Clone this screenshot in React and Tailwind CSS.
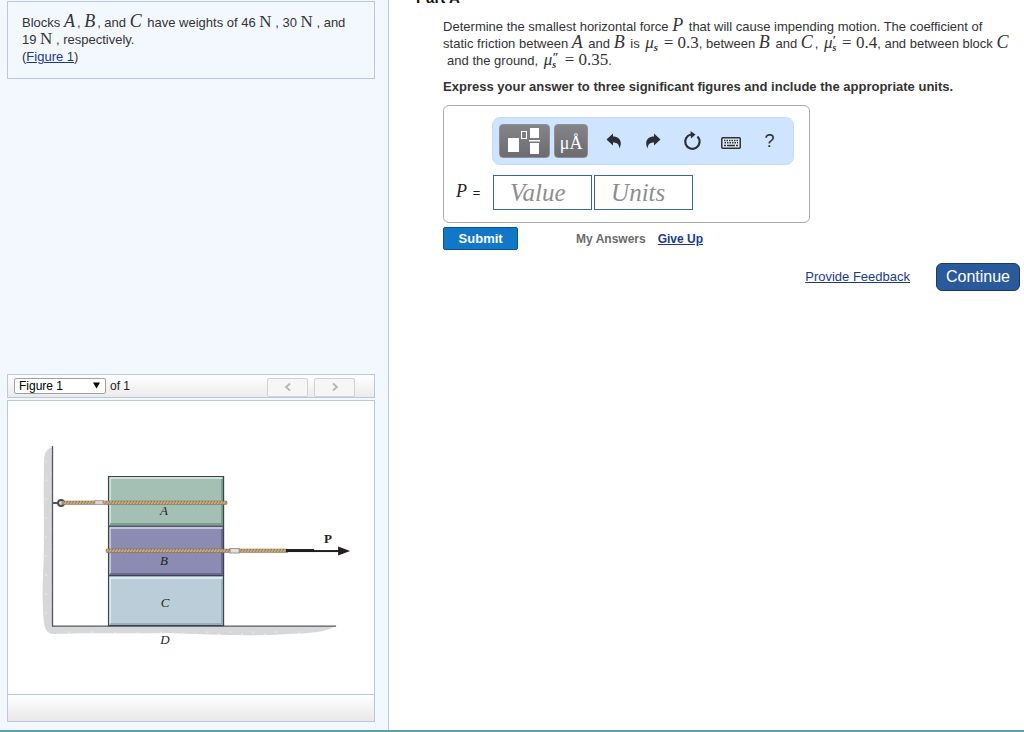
import React, { useState } from "react";

// Italic math variable, e.g. A, B, P
function Var({ children }) {
  return (
    <i className="mr-0.5 font-['Liberation_Serif',serif] text-[18px] leading-[0]">
      {children}
    </i>
  );
}

function Num({ children }) {
  return (
    <span className="font-['Liberation_Serif',serif] text-[17px] leading-[0]">
      {children}
    </span>
  );
}

// Coefficient of friction with subscript s and optional primes
function Mu({ primes }) {
  return (
    <i className="mx-0.5 font-['Liberation_Serif',serif] text-[17px] leading-[0]">
      μ
      {primes ? (
        <span className="inline-flex flex-col align-middle h-4 leading-[8px] font-bold">
          <span className="text-[12px]">{primes}</span>
          <span className="text-[10px]">s</span>
        </span>
      ) : (
        <sub className="text-[11px] font-bold">s</sub>
      )}
    </i>
  );
}

function BlocksFigure() {
  return (
    <svg
      viewBox="0 0 366 293"
      className="block w-full h-auto"
      role="img"
      aria-label="Stacked blocks A, B and C on ground D"
    >
      <defs>
        <pattern id="rope" width="3" height="4" patternUnits="userSpaceOnUse">
          <rect width="3" height="4" fill="#d0b487" />
          <path d="M0 4L3 0" stroke="#7d6548" strokeWidth="0.8" />
        </pattern>
        <pattern id="grit" width="23" height="19" patternUnits="userSpaceOnUse">
          <rect width="23" height="19" fill="#d6d7d9" />
          <circle cx="4" cy="5" r="0.7" fill="#fff" />
          <circle cx="15" cy="3" r="0.6" fill="#fff" />
          <circle cx="10" cy="13" r="0.8" fill="#fff" />
          <circle cx="20" cy="15" r="0.6" fill="#f4f4f4" />
        </pattern>
      </defs>

      {/* wall and ground */}
      <path
        d="M44 46C38 48 36 53 36 62C35 100 37 140 35 175C34 195 35 212 36 222C37 229 40 233 46 233C80 231 120 233 160 232C200 233 240 236 280 233C305 232 318 231 327 225L44 225Z"
        fill="url(#grit)"
      />
      <path d="M44.500 45V225.500" stroke="#57585c" strokeWidth="1.3" fill="none" />
      <path d="M44 225H328" stroke="#57585c" strokeWidth="1.3" fill="none" />

      {/* blocks */}
      <rect x="100" y="75" width="116" height="50" fill="#a4c0b5" />
      <path d="M102 124V77H214" stroke="#e0ebe6" strokeWidth="1.5" fill="none" />
      <path d="M214 78V123H102" stroke="#6f9184" strokeWidth="1.5" fill="none" />
      <rect x="100" y="125" width="116" height="50" fill="#8c8cb3" />
      <path d="M102 173V127H214" stroke="#d4d4e6" strokeWidth="1.5" fill="none" />
      <path d="M214 128V173H102" stroke="#5d5d8d" strokeWidth="1.5" fill="none" />
      <rect x="100" y="175" width="116" height="50" fill="#bbcdd8" />
      <path d="M102 223V177H214" stroke="#e9f1f5" strokeWidth="1.5" fill="none" />
      <path d="M214 178V223H102" stroke="#8fa8b6" strokeWidth="1.5" fill="none" />
      <path
        d="M100.500 75.500H215.500V224.500H100.500ZM100.500 125H215.500M100.500 174.500H215.500"
        stroke="#3d454c"
        strokeWidth="1.2"
        fill="none"
      />

      {/* rope tied to the wall */}
      <path d="M45 102H50" stroke="#55575a" strokeWidth="2" />
      <circle cx="53" cy="102" r="3" fill="#d8d8d8" stroke="#4c4e50" strokeWidth="2" />
      <rect x="54" y="100" width="165" height="3.500" rx="1" fill="url(#rope)" stroke="#7d6548" strokeWidth="0.5" />
      <rect x="87" y="99.500" width="8" height="4" fill="#d9d3ce" stroke="#a39a92" strokeWidth="0.7" />

      {/* rope being pulled */}
      <rect x="98" y="148" width="182" height="3.500" rx="1" fill="url(#rope)" stroke="#7d6548" strokeWidth="0.5" />
      <rect x="222" y="147.500" width="9" height="4.500" fill="#e2dfdc" stroke="#8b8681" strokeWidth="0.8" />
      <path d="M278 149.500H306" stroke="#1d1a1b" strokeWidth="3" />
      <path d="M304 150H334" stroke="#231f20" strokeWidth="2" />
      <path d="M330 145.500L342 150L330 154.500Z" fill="#231f20" />

      <g
        fill="#231f20"
        fontFamily="'Liberation Serif', serif"
        fontSize="13"
        textAnchor="middle"
      >
        <text x="156" y="114" fontStyle="italic">A</text>
        <text x="156" y="164" fontStyle="italic">B</text>
        <text x="157" y="206" fontStyle="italic">C</text>
        <text x="157" y="243" fontStyle="italic">D</text>
        <text x="320" y="142" fontWeight="bold">P</text>
      </g>
    </svg>
  );
}

function ProblemPane() {
  const [figure, setFigure] = useState("1");

  return (
    <aside className="w-[38%] shrink-0 flex flex-col justify-between bg-[#f3f8fe] border-r border-[#bccbdc] pt-px pl-[7px] pr-[13px] pb-2">
      <div className="border border-[#b9c9dc] px-3.5 pt-3 h-[78px] leading-[17px] whitespace-nowrap">
        <p>
          Blocks <Var>A</Var>, <Var>B</Var>, and <Var>C</Var> have weights of 46{" "}
          <Num>N</Num> , 30 <Num>N</Num> , and
          <br />
          19 <Num>N</Num> , respectively.
        </p>
        <p>
          (
          <a href="#figure" className="text-[#1b3a8c] underline">
            Figure 1
          </a>
          )
        </p>
      </div>

      <section id="figure">
        <div className="flex items-center border border-[#b9c9dc] bg-linear-to-b from-white to-[#ebebeb] h-6 pl-1.5 pr-[19px] text-[12px] text-[#222]">
          <div className="relative flex items-center">
            <select
              aria-label="Figure"
              value={figure}
              onChange={(e) => setFigure(e.target.value)}
              className="appearance-none w-[92px] h-4 pl-1 leading-[14px] bg-white border border-[#a0a0a0] rounded-xs text-black"
            >
              <option value="1">Figure 1</option>
            </select>
            <svg viewBox="0 0 8 7" className="absolute right-1.5 w-[7px] h-[7px] pointer-events-none">
              <path d="M0 0H8L4 7Z" fill="#000" />
            </svg>
          </div>
          <span className="ml-1">of 1</span>
          <div className="ml-auto flex gap-1.5 self-end">
            <button
              aria-label="Previous figure"
              className="w-[41px] h-[19px] flex items-center justify-center border border-[#d2d2d2] rounded-xs bg-[#f6f6f6]"
            >
              <svg viewBox="0 0 8 10" className="w-2 h-2.5">
                <path d="M6 1.500L2 5L6 8.500" stroke="#b5b5b5" strokeWidth="1.8" fill="none" />
              </svg>
            </button>
            <button
              aria-label="Next figure"
              className="w-[41px] h-[19px] flex items-center justify-center border border-[#d2d2d2] rounded-xs bg-[#f6f6f6]"
            >
              <svg viewBox="0 0 8 10" className="w-2 h-2.5">
                <path d="M2 1.500L6 5L2 8.500" stroke="#b5b5b5" strokeWidth="1.8" fill="none" />
              </svg>
            </button>
          </div>
        </div>
        <div className="mt-0.5 border border-[#b9c9dc] bg-white">
          <BlocksFigure />
          <div className="h-[27px] border-t border-[#b9c9dc] bg-linear-to-b from-white to-[#e8e8e8]" />
        </div>
      </section>
    </aside>
  );
}

function Toolbar() {
  const dark =
    "h-[34px] rounded-sm bg-linear-to-b from-[#858589] to-[#6c6c70] border border-[#8d8d92] flex items-center justify-center text-white";
  const plain = "w-[39px] h-[34px] flex items-center justify-center text-[#2b2f33]";

  return (
    <div className="flex items-center h-12 w-[302px] pl-1.5 rounded-lg bg-[#cfe4fe] border border-[#c6dcf5]">
      <button aria-label="Templates" className={`${dark} w-[51px]`}>
        <svg viewBox="0 0 34 28" className="w-[34px] h-7">
          <rect x="0" y="11" width="11" height="14" fill="#fff" />
          <rect x="13.500" y="4.500" width="5" height="7" fill="none" stroke="#fff" />
          <rect x="22" y="1" width="9" height="10" fill="#fff" />
          <rect x="21" y="13" width="11" height="1.500" fill="#fff" />
          <rect x="22" y="16" width="9" height="11" fill="#fff" />
        </svg>
      </button>
      <button
        aria-label="Symbols"
        className={`${dark} w-[34px] ml-1 mr-1.5 pt-1 font-['Liberation_Serif',serif] text-[18px] leading-none`}
      >
        μÅ
      </button>
      <button aria-label="Undo" className={plain}>
        <svg viewBox="0 0 16 16" className="w-4 h-4" fill="currentColor">
          <path d="M7 0.500V3.500C13 3.500 17 8 13.500 15.500C13 11.500 11.500 9.500 7 9.500V12.500L0.500 6.500Z" />
        </svg>
      </button>
      <button aria-label="Redo" className={plain}>
        <svg viewBox="0 0 16 16" className="w-4 h-4" fill="currentColor">
          <path d="M9 0.500V3.500C3 3.500 -1 8 2.500 15.500C3 11.500 4.500 9.500 9 9.500V12.500L15.500 6.500Z" />
        </svg>
      </button>
      <button aria-label="Reset" className={plain}>
        <svg viewBox="0 0 20 20" className="w-5 h-5">
          <path d="M15.500 5.500A7.200 7.200 0 1 1 9 3.500" fill="none" stroke="currentColor" strokeWidth="2.2" />
          <path d="M8.500 0L13.500 3.500L9 7.500Z" fill="currentColor" />
        </svg>
      </button>
      <button aria-label="Keyboard" className={plain}>
        <svg viewBox="0 0 20 12" className="w-5 h-3 mt-1">
          <rect x="0.800" y="0.800" width="18.400" height="10.400" rx="1" fill="#e6f0fc" stroke="currentColor" strokeWidth="1.5" />
          <path d="M3 3.500H17M3.500 5.800H17" stroke="currentColor" strokeWidth="1.5" strokeDasharray="1.500 1" />
          <path d="M3 8.500H5M6 8.500H14M15 8.500H17" stroke="currentColor" strokeWidth="1.5" />
        </svg>
      </button>
      <button aria-label="Help" className={`${plain} text-[18px]`}>
        ?
      </button>
    </div>
  );
}

function AnswerPane() {
  const [value, setValue] = useState("");
  const [units, setUnits] = useState("");
  const field =
    "w-[99px] h-[35px] border border-[#3a63a8] bg-white px-4 font-['Liberation_Serif',serif] italic text-[25px] leading-none text-[#333] placeholder-[#8e8e8e] outline-none";

  return (
    <main className="flex-1 min-w-0 overflow-hidden">
      <h2 className="-mt-3 ml-[27px] text-[15px] leading-5 font-bold text-[#111]">
        Part A
      </h2>
      <div className="ml-[54px]">
        <p className="mt-2.5 leading-[17px] whitespace-nowrap">
          Determine the smallest horizontal force <Var>P</Var> that will cause
          impending motion. The coefficient of
          <br />
          static friction between <Var>A</Var> and <Var>B</Var> is <Mu />{" "}
          <Num>= 0.3</Num>, between <Var>B</Var> and <Var>C</Var>,{" "}
          <Mu primes="′" /> <Num>= 0.4</Num>, and between block <Var>C</Var>
          <br />
          <span className="pl-1">
            and the ground, <Mu primes="″" /> <Num>= 0.35</Num>.
          </span>
        </p>
        <p className="mt-[9px] leading-[17px] font-bold">
          Express your answer to three significant figures and include the
          appropriate units.
        </p>

        <form onSubmit={(e) => e.preventDefault()}>
          <div className="mt-2.5 w-[367px] h-[118px] border border-[#a9a9a9] rounded-md pt-[11px] pl-3">
            <div className="ml-9">
              <Toolbar />
            </div>
            <div className="mt-2.5 flex items-center">
              <label htmlFor="value" className="w-[37px] whitespace-nowrap text-[#222]">
                <Var>P</Var> =
              </label>
              <input
                id="value"
                placeholder="Value"
                value={value}
                onChange={(e) => setValue(e.target.value)}
                className={field}
              />
              <input
                aria-label="Units"
                placeholder="Units"
                value={units}
                onChange={(e) => setUnits(e.target.value)}
                className={`${field} ml-0.5`}
              />
            </div>
          </div>
          <div className="mt-1 flex items-center text-[12px] font-bold">
            <button
              type="submit"
              className="w-[75px] h-[23px] rounded-xs border border-[#0a5590] bg-[#1177c9] text-white text-[13px]"
            >
              Submit
            </button>
            <span className="ml-[58px] text-[#6b6b6b]">My Answers</span>
            <a href="#give-up" className="ml-3 text-[#1b3a8c] underline">
              Give Up
            </a>
          </div>
        </form>
      </div>

      <div className="mt-[13px] mr-1 flex items-center justify-end">
        <a href="#feedback" className="mr-[26px] text-[#1b3a8c] underline">
          Provide Feedback
        </a>
        <button className="w-[84px] h-7 rounded-md border border-[#173a68] bg-[#2a5a9c] text-white text-[16px]">
          Continue
        </button>
      </div>
    </main>
  );
}

export default function App() {
  return (
    <div className="min-h-screen flex border-b-2 border-[#5a9fb0] bg-white font-['Liberation_Sans',Arial,sans-serif] text-[13px] text-[#333] overflow-hidden">
      <ProblemPane />
      <AnswerPane />
    </div>
  );
}
